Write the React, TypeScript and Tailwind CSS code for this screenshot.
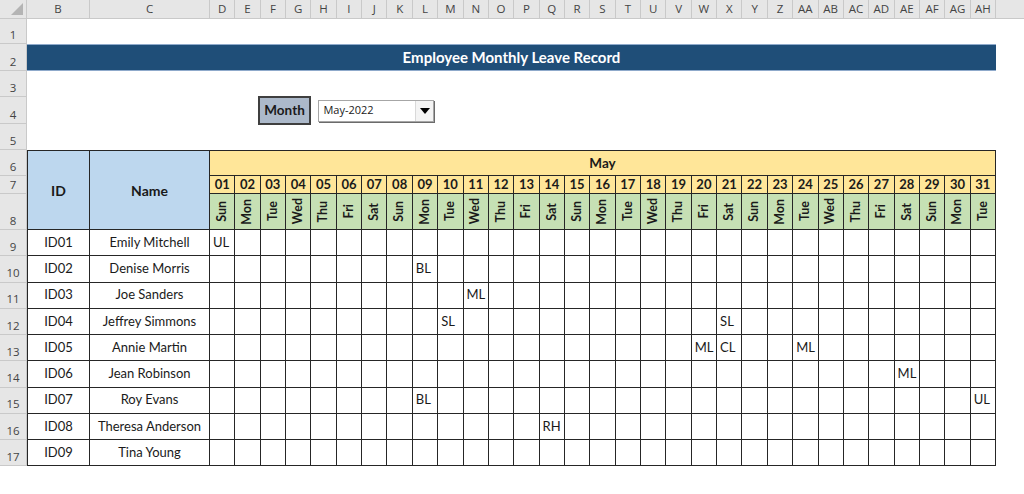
import React from 'react';

type Employee = {
  id: string;
  name: string;
  leaves: Record<number, string>;
};

const employees: Employee[] = [
  { id: 'ID01', name: 'Emily Mitchell', leaves: { 1: 'UL' } },
  { id: 'ID02', name: 'Denise Morris', leaves: { 9: 'BL' } },
  { id: 'ID03', name: 'Joe Sanders', leaves: { 11: 'ML' } },
  { id: 'ID04', name: 'Jeffrey Simmons', leaves: { 10: 'SL', 21: 'SL' } },
  { id: 'ID05', name: 'Annie Martin', leaves: { 20: 'ML', 21: 'CL', 24: 'ML' } },
  { id: 'ID06', name: 'Jean Robinson', leaves: { 28: 'ML' } },
  { id: 'ID07', name: 'Roy Evans', leaves: { 9: 'BL', 31: 'UL' } },
  { id: 'ID08', name: 'Theresa Anderson', leaves: { 14: 'RH' } },
  { id: 'ID09', name: 'Tina Young', leaves: {} },
];

const weekDays = ['Sun', 'Mon', 'Tue', 'Wed', 'Thu', 'Fri', 'Sat'];
const days = Array.from({ length: 31 }, (_, i) => i + 1);

// column letters D..AH
const colLetter = (n: number) =>
  n < 26 ? String.fromCharCode(65 + n) : 'A' + String.fromCharCode(65 + n - 26);

function ColHead({ label }: { label: string }) {
  return (
    <div className="flex items-center justify-center bg-[#e6e6e6] border-r border-b border-[#c9c9c9] text-[11.5px] text-[#444] font-['Open_Sans',sans-serif]">
      {label}
    </div>
  );
}

function RowNum({ n }: { n: number }) {
  return (
    <div className="flex items-end justify-center pb-[3px] bg-[#e6e6e6] border-r border-b border-[#c9c9c9] text-[11.5px] text-[#444] leading-none font-['Open_Sans',sans-serif]">
      {n}
    </div>
  );
}

export default function App() {
  return (
    <div className="w-[1024px] h-[494px] bg-white overflow-hidden font-['Lato',sans-serif] text-[#1a1a1a]">
      <div className="grid grid-cols-[27px_63px_120px_repeat(31,minmax(0,1fr))_28px] grid-rows-[19px_25px_27px_26px_27px_26px_26px_18px_36px_repeat(9,26.25px)]">
        {/* column header strip */}
        <div className="relative bg-[#e6e6e6] border-r border-b border-[#c9c9c9]">
          <div className="absolute right-[3px] bottom-[3px] w-0 h-0 border-l-[12px] border-l-transparent border-b-[12px] border-b-[#b4b4b4]" />
        </div>
        <ColHead label="B" />
        <ColHead label="C" />
        {days.map(d => (
          <ColHead key={d} label={colLetter(d + 2)} />
        ))}
        <div className="bg-[#e6e6e6] border-b border-[#c9c9c9]" />

        {/* row 1 */}
        <RowNum n={1} />
        <div className="col-span-34" />

        {/* row 2: title */}
        <RowNum n={2} />
        <div className="col-span-33 flex items-center justify-center bg-[#1f4e78] border-y border-[#8faacb] text-white text-[15px] font-bold">
          Employee Monthly Leave Record
        </div>
        <div />

        {/* row 3 */}
        <RowNum n={3} />
        <div className="col-span-34" />

        {/* row 4: month selector */}
        <RowNum n={4} />
        <div className="col-span-4" />
        <div className="col-span-2 flex items-center justify-center -ml-[3px] my-[-1px] bg-[#acb9ca] border-2 border-[#3f3f3f] text-[13.5px] font-bold">
          Month
        </div>
        <div className="col-span-27 flex items-center">
          <div className="ml-[7px] w-[116px] h-[22px] flex items-center bg-white border border-[#a6a6a6] shadow-[1px_1px_0_#6b6b6b]">
            <span className="flex-1 pl-[4px] text-[11px] font-['Open_Sans',sans-serif]">May-2022</span>
            <div className="w-[18px] h-full flex items-center justify-center border-l border-[#d9d9d9] bg-[#f4f4f4]">
              <div className="w-0 h-0 border-l-[5px] border-r-[5px] border-t-[6px] border-l-transparent border-r-transparent border-t-black" />
            </div>
          </div>
        </div>
        <div />

        {/* row 5 */}
        <RowNum n={5} />
        <div className="col-span-34" />

        {/* rows 6-8: table header */}
        <RowNum n={6} />
        <div className="row-span-3 flex items-center justify-center bg-[#bdd7ee] border border-[#262626] text-[14px] font-bold">
          ID
        </div>
        <div className="row-span-3 flex items-center justify-center bg-[#bdd7ee] border-y border-r border-[#262626] text-[14px] font-bold">
          Name
        </div>
        <div className="col-span-31 flex items-center justify-center bg-[#ffe699] border-y border-r border-[#262626] text-[13.5px] font-bold">
          May
        </div>
        <div />

        <RowNum n={7} />
        {days.map(d => (
          <div
            key={d}
            className="flex items-center justify-center bg-[#ffe699] border-r border-b border-[#262626] text-[13px] font-bold leading-none"
          >
            {String(d).padStart(2, '0')}
          </div>
        ))}
        <div />

        <RowNum n={8} />
        {days.map(d => (
          <div
            key={d}
            className="flex items-center justify-center bg-[#c6e0b4] border-r border-b border-[#262626]"
          >
            <span className="[writing-mode:vertical-rl] rotate-180 text-[12.5px] font-bold leading-none">
              {weekDays[(d - 1) % 7]}
            </span>
          </div>
        ))}
        <div />

        {/* rows 9-17: employees */}
        {employees.map((emp, i) => (
          <React.Fragment key={emp.id}>
            <RowNum n={9 + i} />
            <div className="flex items-center justify-center border-x border-b border-[#262626] text-[13px]">
              {emp.id}
            </div>
            <div className="flex items-center justify-center border-r border-b border-[#262626] text-[13px] whitespace-nowrap">
              {emp.name}
            </div>
            {days.map(d => (
              <div
                key={d}
                className="flex items-center pl-[3px] border-r border-b border-[#262626] text-[13px] overflow-hidden whitespace-nowrap"
              >
                {emp.leaves[d] ?? ''}
              </div>
            ))}
            <div />
          </React.Fragment>
        ))}
      </div>
    </div>
  );
}
